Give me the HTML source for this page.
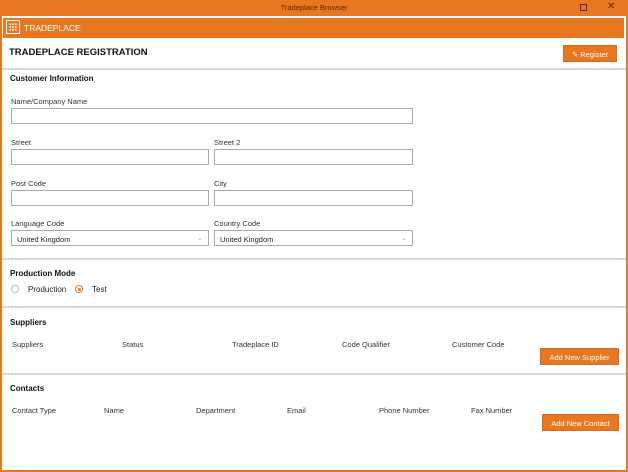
<!DOCTYPE html>
<html><head><style>
*{margin:0;padding:0;box-sizing:border-box}
body{width:628px;height:472px;background:#e87722;font-family:"Liberation Sans",sans-serif;position:relative;overflow:hidden;font-size:7.5px;color:#222}
.a{position:absolute}
.main{position:absolute;left:2px;top:16px;width:624px;height:454px;background:#fff}
.hl{position:absolute;left:2px;width:624px;height:2px;background:#d8d8d8}
.in{position:absolute;border:1px solid #a9a9a9;height:16px;background:#fff;font-size:7.5px;padding:4px 5px;color:#222}
.lb{position:absolute;font-size:7.5px;color:#333}
.h{position:absolute;font-weight:bold;font-size:8px;color:#111}
.btn{position:absolute;background:#e87722;color:#fff;font-size:7.5px;text-align:center;border:1px solid #d86a18}
.th{position:absolute;font-size:7.5px;color:#333}
</style></head><body>
<div class="a" style="left:0;top:3px;width:628px;text-align:center;color:#5a2a00;font-size:7.5px">Tradeplace Browser</div>
<div class="a" style="left:580px;top:4px;width:7px;height:7px;border:1px solid #5a2a00"></div>
<div class="a" style="left:607px;top:1px;font-size:10px;color:#5a2a00">✕</div>
<div class="main"></div>
<div class="a" style="left:3px;top:18px;width:621px;height:20px;background:#e87722"></div>
<div class="a" style="left:6px;top:20px;width:14px;height:14px;border:1px solid #fff;border-radius:1px"></div>
<svg class="a" style="left:6px;top:20px" width="14" height="14"><g fill="#fff"><rect x="3.5" y="3.5" width="1.6" height="1.6"/><rect x="6.2" y="3.5" width="1.6" height="1.6"/><rect x="8.9" y="3.5" width="1.6" height="1.6"/><rect x="3.5" y="6.2" width="1.6" height="1.6"/><rect x="6.2" y="6.2" width="1.6" height="1.6"/><rect x="8.9" y="6.2" width="1.6" height="1.6"/><rect x="3.5" y="8.9" width="1.6" height="1.6"/><rect x="6.2" y="8.9" width="1.6" height="1.6"/><rect x="8.9" y="8.9" width="1.6" height="1.6"/></g></svg>
<div class="a" style="left:24px;top:23px;color:#fff;font-size:8.5px">TRADEPLACE</div>
<div class="a" style="left:9px;top:47px;font-weight:bold;font-size:9.5px;color:#111">TRADEPLACE REGISTRATION</div>
<div class="btn" style="left:563px;top:45px;width:54px;height:17px;padding-top:4px">✎ Register</div>
<div class="hl" style="top:68px"></div>
<div class="h" style="left:10px;top:74px">Customer Information</div>
<div class="lb" style="left:11px;top:97px">Name/Company Name</div>
<div class="in" style="left:11px;top:108px;width:402px"></div>
<div class="lb" style="left:11px;top:138px">Street</div>
<div class="lb" style="left:214px;top:138px">Street 2</div>
<div class="in" style="left:11px;top:149px;width:198px"></div>
<div class="in" style="left:214px;top:149px;width:199px"></div>
<div class="lb" style="left:11px;top:179px">Post Code</div>
<div class="lb" style="left:214px;top:179px">City</div>
<div class="in" style="left:11px;top:190px;width:198px"></div>
<div class="in" style="left:214px;top:190px;width:199px"></div>
<div class="lb" style="left:11px;top:219px">Language Code</div>
<div class="lb" style="left:214px;top:219px">Country Code</div>
<div class="in" style="left:11px;top:230px;width:198px">United Kingdom<span style="position:absolute;right:5px;top:2px;color:#aaa">⌄</span></div>
<div class="in" style="left:214px;top:230px;width:199px">United Kingdom<span style="position:absolute;right:5px;top:2px;color:#aaa">⌄</span></div>
<div class="hl" style="top:258px"></div>
<div class="h" style="left:10px;top:269px">Production Mode</div>
<div class="a" style="left:11px;top:285px;width:8px;height:8px;border:1px solid #bbb;border-radius:50%"></div>
<div class="a" style="left:28px;top:285px;font-size:8px">Production</div>
<div class="a" style="left:75px;top:285px;width:8px;height:8px;border:1px solid #e87722;border-radius:50%"></div>
<div class="a" style="left:77.5px;top:287.5px;width:3px;height:3px;background:#e87722;border-radius:50%"></div>
<div class="a" style="left:92px;top:285px;font-size:8px">Test</div>
<div class="hl" style="top:306px"></div>
<div class="h" style="left:10px;top:318px">Suppliers</div>
<div class="th" style="left:12px;top:340px">Suppliers</div>
<div class="th" style="left:122px;top:340px">Status</div>
<div class="th" style="left:232px;top:340px">Tradeplace ID</div>
<div class="th" style="left:342px;top:340px">Code Qualifier</div>
<div class="th" style="left:452px;top:340px">Customer Code</div>
<div class="btn" style="left:540px;top:348px;width:79px;height:17px;padding-top:4px">Add New Supplier</div>
<div class="hl" style="top:373px"></div>
<div class="h" style="left:10px;top:384px">Contacts</div>
<div class="th" style="left:12px;top:406px">Contact Type</div>
<div class="th" style="left:104px;top:406px">Name</div>
<div class="th" style="left:196px;top:406px">Department</div>
<div class="th" style="left:287px;top:406px">Email</div>
<div class="th" style="left:379px;top:406px">Phone Number</div>
<div class="th" style="left:471px;top:406px">Fax Number</div>
<div class="btn" style="left:542px;top:414px;width:77px;height:17px;padding-top:4px">Add New Contact</div>
</body></html>
